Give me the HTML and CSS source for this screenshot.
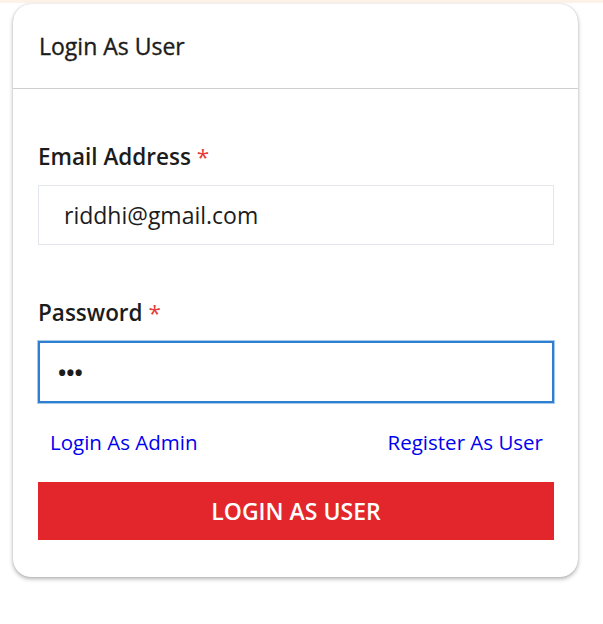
FILE: index.html
```html
<!DOCTYPE html>
<html>
<head>
<meta charset="utf-8">
<link rel="stylesheet" href="styles.css">
</head>
<body>
<div class="stripe"></div>
<div class="card">
  <div class="card-header">Login As User</div>
  <form class="card-body">
    <div class="field">
      <label class="label">Email Address <span class="req">*</span></label>
      <div class="input">riddhi@gmail.com</div>
    </div>
    <div class="field">
      <label class="label">Password <span class="req">*</span></label>
      <div class="input focused"><span class="dots">•••</span></div>
    </div>
    <div class="links">
      <a class="link">Login As Admin</a>
      <a class="link">Register As User</a>
    </div>
    <div class="btn">LOGIN AS USER</div>
  </form>
</div>
</body>
</html>
```

FILE: styles.css
```css
* { box-sizing: border-box; }
html, body { margin: 0; padding: 0; background: #fff; }
body {
  font-family: "Open Sans", "Noto Sans", sans-serif;
  color: #1c1c1c;
  width: 603px;
  height: 624px;
  overflow: hidden;
}
.stripe {
  height: 3px;
  background: #fdf2e8;
}
.card {
  margin: 1px 0 0 13px;
  width: 565px;
  height: 573px;
  background: #fff;
  border-radius: 18px;
  box-shadow: 0 2px 4px rgba(0,0,0,0.3), 0 0 1px rgba(0,0,0,0.25);
  overflow: hidden;
}
.card-header {
  height: 85px;
  border-bottom: 1px solid #cfcfcf;
  padding-left: 26px;
  display: flex;
  align-items: center;
  font-size: 23px;
  font-weight: 400;
  -webkit-text-stroke: 0.35px #1c1c1c;
}
.card-body {
  padding: 53px 24px 0 25px;
  display: flex;
  flex-direction: column;
}
.field {
  display: flex;
  flex-direction: column;
}
.field + .field { margin-top: 53px; }
.label {
  font-size: 22.5px;
  font-weight: 600;
  line-height: 30px;
  margin-bottom: 13px;
}
.req { color: #e53935; font-weight: 400; }
.input {
  height: 60px;
  border: 1px solid #e3e6ea;
  padding-left: 25px;
  display: flex;
  align-items: center;
  font-size: 23px;
  color: #1c1c1c;
}
.input.focused {
  height: 62px;
  border: 2px solid #2f7fd1;
  box-shadow: 0 0 0 1px #a9c9ec;
  padding-left: 18px;
}
.dots { font-size: 22px; font-weight: 700; letter-spacing: 0px; }
.links {
  display: flex;
  justify-content: space-between;
  padding: 0 11px 0 12px;
  margin-top: 24px;
  height: 29px;
  align-items: center;
}
.link {
  color: #0000ee;
  font-size: 20.5px;
}
.btn {
  margin-top: 26px;
  height: 58px;
  background: #e3262b;
  color: #fff;
  display: flex;
  align-items: center;
  justify-content: center;
  font-size: 23px;
  font-weight: 600;
}
```
